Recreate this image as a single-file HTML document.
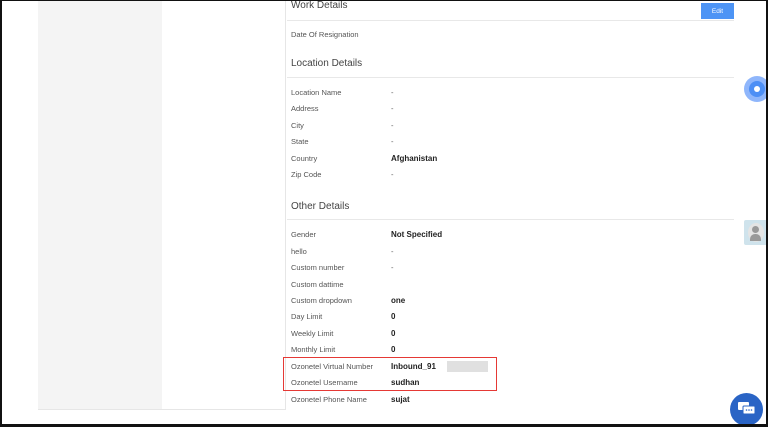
<!DOCTYPE html>
<html><head><meta charset="utf-8"><style>
*{margin:0;padding:0;box-sizing:border-box}
body{width:768px;height:427px;overflow:hidden;background:#fff;font-family:"Liberation Sans",sans-serif;position:relative}
.frame{position:absolute;left:0;top:0;width:768px;height:427px;border:2px solid #111;border-top:1px solid #111;border-bottom:3px solid #111;pointer-events:none;z-index:10}
.lp{position:absolute;left:38px;top:0;width:124px;height:410px;background:#f4f4f4;border-bottom:1px solid #e6e6e6}
.mp{position:absolute;left:162px;top:0;width:124px;height:410px;background:#fff;border-right:1px solid #e6e6e6;border-bottom:1px solid #e6e6e6}
.h{position:absolute;left:291px;font-size:10px;color:#444}
.ln{position:absolute;left:287px;width:447px;height:1px;background:#e8e8e8}
.l{position:absolute;left:291px;font-size:7.5px;color:#555}
.v{position:absolute;left:391px;font-size:8px;color:#222;font-weight:bold}
.vd{position:absolute;left:391px;font-size:7.5px;color:#555}
</style></head><body>
<div class="lp"></div><div class="mp"></div>
<div class="h" style="top:0px">Work Details</div>
<div class="ln" style="top:20px"></div>
<div style="position:absolute;left:701px;top:3px;width:33px;height:16px;background:#4d94f5;color:#fff;font-size:6.5px;text-align:center;line-height:17px">Edit</div>
<div class="l" style="top:30px">Date Of Resignation</div>
<div class="h" style="top:58px">Location Details</div>
<div class="ln" style="top:77px"></div>
<div class="l" style="top:88px">Location Name</div><div class="vd" style="top:88px">-</div>
<div class="l" style="top:104px">Address</div><div class="vd" style="top:104px">-</div>
<div class="l" style="top:121px">City</div><div class="vd" style="top:121px">-</div>
<div class="l" style="top:137px">State</div><div class="vd" style="top:137px">-</div>
<div class="l" style="top:154px">Country</div><div class="v" style="top:154px">Afghanistan</div>
<div class="l" style="top:170px">Zip Code</div><div class="vd" style="top:170px">-</div>
<div class="h" style="top:201px">Other Details</div>
<div class="ln" style="top:219px"></div>
<div class="l" style="top:230px">Gender</div><div class="v" style="top:230px">Not Specified</div>
<div class="l" style="top:247px">hello</div><div class="vd" style="top:247px">-</div>
<div class="l" style="top:263px">Custom number</div><div class="vd" style="top:263px">-</div>
<div class="l" style="top:280px">Custom dattime</div>
<div class="l" style="top:296px">Custom dropdown</div><div class="v" style="top:296px">one</div>
<div class="l" style="top:312px">Day Limit</div><div class="v" style="top:312px">0</div>
<div class="l" style="top:329px">Weekly Limit</div><div class="v" style="top:329px">0</div>
<div class="l" style="top:345px">Monthly Limit</div><div class="v" style="top:345px">0</div>
<div class="l" style="top:362px">Ozonetel Virtual Number</div><div class="v" style="top:362px">Inbound_91</div>
<div style="position:absolute;left:447px;top:361px;width:41px;height:11px;background:#e0e0e0"></div>
<div class="l" style="top:378px">Ozonetel Username</div><div class="v" style="top:378px">sudhan</div>
<div class="l" style="top:395px">Ozonetel Phone Name</div><div class="v" style="top:395px">sujat</div>
<div style="position:absolute;left:283px;top:357px;width:214px;height:34px;border:1.5px solid #e53935"></div>
<div style="position:absolute;left:744px;top:76px;width:26px;height:26px;border-radius:50%;background:#8fb6fb"></div>
<div style="position:absolute;left:749px;top:81px;width:16px;height:16px;border-radius:50%;background:#4d8ff5"></div>
<div style="position:absolute;left:754px;top:86px;width:6px;height:6px;border-radius:50%;background:#fff"></div>
<div style="position:absolute;left:744px;top:220px;width:26px;height:25px;background:#cfe3ec;border-radius:2px"></div>
<div style="position:absolute;left:748px;top:223px;width:16px;height:19px;border-radius:50%;background:#e4e4e4"></div>
<div style="position:absolute;left:752px;top:226px;width:7px;height:7px;border-radius:50%;background:#999"></div>
<div style="position:absolute;left:750px;top:234px;width:11px;height:7px;border-radius:5px 5px 0 0;background:#999"></div>
<div style="position:absolute;left:730px;top:393px;width:33px;height:33px;border-radius:50%;background:#2a64c5"></div>
<svg style="position:absolute;left:737px;top:401px" width="20" height="16" viewBox="0 0 20 16"><rect x="1" y="1" width="11" height="8" rx="1" fill="#fff"/><rect x="6" y="5" width="12" height="8" rx="1" fill="#fff" stroke="#2a64c5" stroke-width="1"/><circle cx="9.5" cy="9" r=".8" fill="#2a64c5"/><circle cx="12" cy="9" r=".8" fill="#2a64c5"/><circle cx="14.5" cy="9" r=".8" fill="#2a64c5"/></svg>
<div class="frame"></div>
</body></html>
